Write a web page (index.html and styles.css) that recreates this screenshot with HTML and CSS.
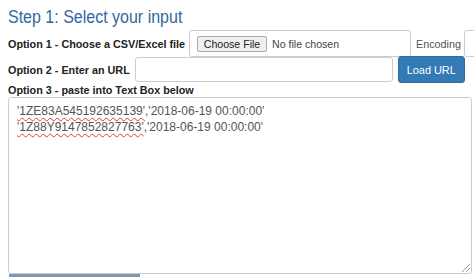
FILE: index.html
```html
<!DOCTYPE html>
<html lang="en">
<head>
  <meta charset="UTF-8">
  <title>Step 1</title>
  <link rel="stylesheet" href="styles.css">
</head>
<body>
  <h2 class="step-title">Step 1: Select your input</h2>

  <div class="row row-file">
    <label class="opt">Option 1 - Choose a CSV/Excel file</label>
    <div class="file-box">
      <span class="file-btn">Choose File</span>
      <span class="file-name">No file chosen</span>
    </div>
    <span class="enc-label">Encoding</span>
    <div class="enc-box"></div>
  </div>

  <div class="row row-url">
    <label class="opt">Option 2 - Enter an URL</label>
    <div class="url-box"></div>
    <button class="load-btn">Load URL</button>
  </div>

  <label class="opt opt3">Option 3 - paste into Text Box below</label>
  <div class="text-box">
    <div class="line"><span class="sq">'1ZE83A545192635139'</span>,'2018-06-19 00:00:00'</div>
    <div class="line"><span class="sq">'1Z88Y9147852827763'</span>,'2018-06-19 00:00:00'</div>
    <span class="grip"></span>
  </div>
  <div class="scroll-bar"><div class="scroll-thumb"></div></div>
</body>
</html>
```
FILE: styles.css
```css
html {
  overflow: hidden;
}

body {
  margin: 0;
  padding: 0 0 0 8px;
  box-sizing: border-box;
  width: 474px;
  font-family: "Liberation Sans", Arial, sans-serif;
  color: #333;
  background: #fff;
  overflow: hidden;
}

.step-title {
  margin: 0;
  padding-top: 8px;
  height: 22px;
  font-size: 16px;
  font-weight: normal;
  line-height: 22px;
  color: #3168a0;
  transform: scaleY(1.15);
  transform-origin: left bottom;
}

.row {
  display: flex;
  align-items: center;
  white-space: nowrap;
}

.opt {
  font-size: 10.8px;
  font-weight: bold;
  color: #222;
}

.row-file {
  height: 27px;
  overflow: hidden;
}

.file-box {
  margin-left: 4px;
  width: 222px;
  height: 27px;
  border: 1px solid #ccc;
  border-radius: 3px;
  display: flex;
  align-items: center;
  padding-left: 7px;
  box-sizing: border-box;
  flex-shrink: 0;
}

.file-btn {
  width: 70px;
  height: 16px;
  box-sizing: border-box;
  text-align: center;
  font-size: 10.6px;
  line-height: 14px;
  color: #222;
  background: #efefef;
  border: 1px solid #aaa;
  border-radius: 2px;
}

.file-name {
  margin-left: 5px;
  font-size: 10.6px;
  color: #444;
}

.enc-label {
  margin-left: 5px;
  font-size: 10.8px;
  color: #555;
}

.enc-box {
  margin-left: 3px;
  width: 40px;
  height: 27px;
  box-sizing: border-box;
  border: 1px solid #ccc;
  border-radius: 3px;
  flex-shrink: 0;
}

.row-url {
  height: 27px;
  margin-top: -1px;
}

.url-box {
  margin-left: 5px;
  width: 258px;
  height: 25px;
  border: 1px solid #ccc;
  border-radius: 3px;
  box-sizing: border-box;
  flex-shrink: 0;
}

.load-btn {
  margin-left: 5px;
  width: 67px;
  height: 27px;
  border: 1px solid #2e6da4;
  border-radius: 3px;
  background: #337ab7;
  color: #fff;
  font-family: inherit;
  font-size: 10.9px;
  padding: 0;
  flex-shrink: 0;
}

.opt3 {
  display: block;
  line-height: 14px;
}

.text-box {
  position: relative;
  width: 464px;
  height: 177px;
  box-sizing: border-box;
  border: 1px solid #ccc;
  border-radius: 3px;
  padding: 5px 8px;
  font-size: 12px;
  color: #555;
}

.line {
  line-height: 16px;
}

.sq {
  text-decoration: underline wavy #e03a3a;
  text-decoration-thickness: 1px;
  text-underline-offset: 2px;
}

.grip {
  position: absolute;
  right: 1px;
  bottom: 1px;
  width: 8px;
  height: 8px;
  background: linear-gradient(135deg, transparent 45%, #999 45%, #999 52%, transparent 52%, transparent 70%, #999 70%, #999 77%, transparent 77%);
}

.scroll-bar {
  height: 3px;
  width: 464px;
}

.scroll-thumb {
  margin-left: 1px;
  width: 131px;
  height: 3px;
  background: #7d98b3;
}
```
